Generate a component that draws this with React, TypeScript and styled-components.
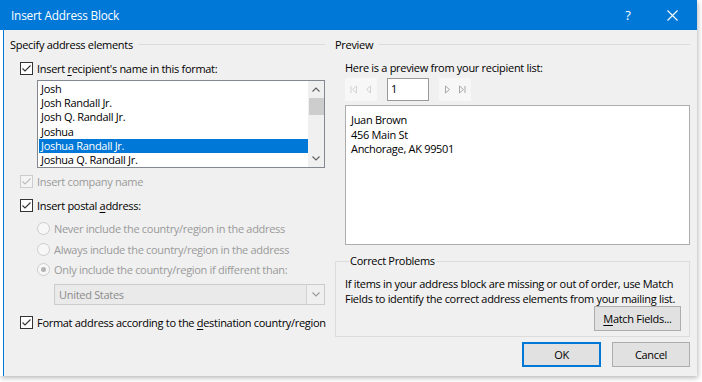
import React from 'react';
import styled, { createGlobalStyle } from 'styled-components';

const Global = createGlobalStyle`
  html, body { margin: 0; padding: 0; background: #ffffff; }
  body {
    font-family: "Open Sans", "Noto Sans", sans-serif;
    font-size: 11px;
    letter-spacing: -0.3px;
    color: #000;
  }
  #root { width: 702px; height: 382px; }
`;

const Window = styled.div`
  width: 697px;
  height: 376px;
  display: flex;
  flex-direction: column;
  box-shadow: 1px 2px 5px rgba(0, 0, 0, 0.28);
`;

const TitleBar = styled.div`
  height: 30px;
  flex: none;
  background: #0078d7;
  color: #fff;
  display: flex;
  align-items: center;
  padding: 0 3px 0 11px;
  font-size: 11.8px;
  letter-spacing: -0.2px;
`;

const Title = styled.div`
  flex: 1;
`;

const TitleButton = styled.div`
  width: 44px;
  height: 30px;
  display: flex;
  align-items: center;
  justify-content: center;
  font-size: 13px;
`;

const Body = styled.div`
  flex: 1;
  margin-left: 3px;
  border-left: 1px solid #0078d7;
  background: #f0f0f0;
  display: grid;
  grid-template-columns: 315px 355px;
  column-gap: 10px;
  padding: 6px 0 0 6px;
  align-items: start;
`;

const Column = styled.div`
  display: flex;
  flex-direction: column;
`;

const GroupHeader = styled.div`
  height: 16px;
  display: flex;
  align-items: center;
  gap: 5px;
`;

const Rule = styled.div`
  flex: 1;
  height: 1px;
  background: #dcdcdc;
`;

const Row = styled.div<{ $top: number; $indent: number; $disabled?: boolean }>`
  height: 16px;
  display: flex;
  align-items: center;
  gap: 4px;
  margin-top: ${(p) => p.$top}px;
  padding-left: ${(p) => p.$indent}px;
  color: ${(p) => (p.$disabled ? '#9a9a9a' : '#000')};
  white-space: nowrap;
`;

const Box = styled.span<{ $disabled?: boolean }>`
  width: 13px;
  height: 13px;
  box-sizing: border-box;
  border: 1px solid ${(p) => (p.$disabled ? '#cccccc' : '#333333')};
  background: ${(p) => (p.$disabled ? '#f4f4f4' : '#ffffff')};
  display: inline-flex;
  flex: none;
`;

const Radio = styled.span<{ $checked?: boolean }>`
  width: 13px;
  height: 13px;
  box-sizing: border-box;
  border-radius: 50%;
  border: 1px solid #cccccc;
  background: #f7f7f7;
  flex: none;
  display: inline-flex;
  align-items: center;
  justify-content: center;
  &::after {
    content: '';
    width: 5px;
    height: 5px;
    border-radius: 50%;
    background: ${(p) => (p.$checked ? '#b4b4b4' : 'transparent')};
  }
`;

const U = styled.span`
  text-decoration: underline;
  text-underline-offset: 2px;
`;

const ListBox = styled.div`
  margin: 4px 0 0 27px;
  width: 288px;
  height: 88px;
  box-sizing: border-box;
  border: 1px solid #828790;
  background: #fff;
  display: flex;
  overflow: hidden;
`;

const Items = styled.div`
  flex: 1;
  display: flex;
  flex-direction: column;
  overflow: hidden;
  padding-top: 1px;
`;

const Item = styled.div<{ $selected?: boolean }>`
  height: 14.2px;
  line-height: 14.2px;
  flex: none;
  padding-left: 2px;
  margin-left: 1px;
  background: ${(p) => (p.$selected ? '#0078d7' : 'transparent')};
  color: ${(p) => (p.$selected ? '#fff' : '#000')};
  white-space: nowrap;
`;

const ScrollBar = styled.div`
  width: 16px;
  flex: none;
  background: #f0f0f0;
  display: flex;
  flex-direction: column;
  align-items: center;
`;

const ScrollArrow = styled.div`
  height: 17px;
  width: 16px;
  display: flex;
  align-items: center;
  justify-content: center;
`;

const Thumb = styled.div`
  width: 15px;
  height: 17px;
  background: #cdcdcd;
`;

const Track = styled.div`
  flex: 1;
`;

const Select = styled.div`
  margin: 7px 0 0 44px;
  width: 271px;
  height: 21px;
  box-sizing: border-box;
  border: 1px solid #cccccc;
  background: #eaeaea;
  display: flex;
  align-items: center;
  color: #8c8c8c;
`;

const SelectText = styled.div`
  flex: 1;
  padding-left: 4px;
`;

const SelectButton = styled.div`
  width: 17px;
  height: 19px;
  border-left: 1px solid #d4d4d4;
  background: #efefef;
  display: flex;
  align-items: center;
  justify-content: center;
`;

const Hint = styled.div`
  margin-top: 8px;
  padding-left: 10px;
  height: 16px;
  line-height: 16px;
`;

const NavRow = styled.div`
  margin: 2px 0 0 10px;
  height: 23px;
  display: flex;
  gap: 10px;
`;

const NavGroup = styled.div`
  width: 32px;
  height: 23px;
  background: #f7f7f7;
  display: flex;
  align-items: center;
  justify-content: space-evenly;
`;

const RecordInput = styled.div`
  width: 42px;
  height: 23px;
  box-sizing: border-box;
  border: 1px solid #9a9a9a;
  background: #fff;
  padding-left: 3px;
  line-height: 20px;
`;

const PreviewBox = styled.div`
  margin: 4px 0 0 10px;
  height: 140px;
  box-sizing: border-box;
  border: 1px solid #adadad;
  background: #fff;
  padding: 7px 0 0 5px;
  line-height: 14.5px;
`;

const Fieldset = styled.fieldset`
  margin: 8px 0 0 0;
  padding: 0 8px 5px 9px;
  border: 1px solid #dcdcdc;
  min-width: 0;
  display: flex;
  flex-direction: column;
`;

const Legend = styled.legend`
  padding: 0 1px;
  margin-left: 4px;
  line-height: 16px;
`;

const Paragraph = styled.div`
  margin-top: 7px;
  line-height: 15px;
  white-space: nowrap;
`;

const Button = styled.div<{ $default?: boolean; $width: number }>`
  width: ${(p) => p.$width}px;
  height: 25px;
  box-sizing: border-box;
  border: 1px solid ${(p) => (p.$default ? '#0078d7' : '#adadad')};
  box-shadow: ${(p) => (p.$default ? 'inset 0 0 0 1px #0078d7' : 'none')};
  background: #e1e1e1;
  display: flex;
  align-items: center;
  justify-content: center;
`;

const FieldsetActions = styled.div`
  display: flex;
  justify-content: flex-end;
  margin-top: 0;
`;

const DialogActions = styled.div`
  display: flex;
  justify-content: flex-end;
  gap: 11px;
  margin-top: 5px;
`;

const Check = ({ disabled }: { disabled?: boolean }) => (
  <Box $disabled={disabled}>
    <svg width="11" height="11" viewBox="0 0 11 11">
      <path d="M1.5 5.5 L4 8 L9.5 2.5" fill="none" stroke={disabled ? '#bdbdbd' : '#333'} strokeWidth="1.1" />
    </svg>
  </Box>
);

const Chevron = ({ up, color = '#606060' }: { up?: boolean; color?: string }) => (
  <svg width="8" height="5" viewBox="0 0 8 5">
    <path d={up ? 'M0.5 4.5 L4 1 L7.5 4.5' : 'M0.5 0.5 L4 4 L7.5 0.5'} fill="none" stroke={color} strokeWidth="1.1" />
  </svg>
);

const NavIcon = ({ dir, bar, color }: { dir: 'left' | 'right'; bar?: boolean; color: string }) => (
  <svg width="8" height="9" viewBox="0 0 8 9">
    {dir === 'left' ? (
      <>
        <path d="M6.5 1 L2.5 4.5 L6.5 8 Z" fill="none" stroke={color} strokeWidth="1" />
        {bar && <path d="M1 1 V8" stroke={color} strokeWidth="1" />}
      </>
    ) : (
      <>
        <path d="M1.5 1 L5.5 4.5 L1.5 8 Z" fill="none" stroke={color} strokeWidth="1" />
        {bar && <path d="M7 1 V8" stroke={color} strokeWidth="1" />}
      </>
    )}
  </svg>
);

const names = [
  'Josh',
  'Josh Randall Jr.',
  'Josh Q. Randall Jr.',
  'Joshua',
  'Joshua Randall Jr.',
  'Joshua Q. Randall Jr.',
];

export default function App() {
  return (
    <>
      <Global />
      <Window>
        <TitleBar>
          <Title>Insert Address Block</Title>
          <TitleButton>?</TitleButton>
          <TitleButton>
            <svg width="11" height="11" viewBox="0 0 11 11">
              <path d="M0.5 0.5 L10.5 10.5 M10.5 0.5 L0.5 10.5" stroke="#fff" strokeWidth="1.1" />
            </svg>
          </TitleButton>
        </TitleBar>
        <Body>
          <Column>
            <GroupHeader>
              Specify address elements
              <Rule />
            </GroupHeader>
            <Row $top={8} $indent={10}>
              <Check />
              <span>
                Insert <U>r</U>ecipient's name in this format:
              </span>
            </Row>
            <ListBox>
              <Items>
                {names.map((n, i) => (
                  <Item key={n} $selected={i === 4}>
                    {n}
                  </Item>
                ))}
              </Items>
              <ScrollBar>
                <ScrollArrow>
                  <Chevron up />
                </ScrollArrow>
                <Thumb />
                <Track />
                <ScrollArrow>
                  <Chevron />
                </ScrollArrow>
              </ScrollBar>
            </ListBox>
            <Row $top={5} $indent={10} $disabled>
              <Check disabled />
              <span>Insert company name</span>
            </Row>
            <Row $top={8} $indent={10}>
              <Check />
              <span>
                Insert postal <U>a</U>ddress:
              </span>
            </Row>
            <Row $top={7} $indent={27} $disabled>
              <Radio />
              <span>Never include the country/region in the address</span>
            </Row>
            <Row $top={5} $indent={27} $disabled>
              <Radio />
              <span>Always include the country/region in the address</span>
            </Row>
            <Row $top={4} $indent={27} $disabled>
              <Radio $checked />
              <span>Only include the country/region if different than:</span>
            </Row>
            <Select>
              <SelectText>United States</SelectText>
              <SelectButton>
                <Chevron color="#9a9a9a" />
              </SelectButton>
            </Select>
            <Row $top={9} $indent={10}>
              <Check />
              <span>
                Format address according to the <U>d</U>estination country/region
              </span>
            </Row>
          </Column>
          <Column>
            <GroupHeader>
              Preview
              <Rule />
            </GroupHeader>
            <Hint>Here is a preview from your recipient list:</Hint>
            <NavRow>
              <NavGroup>
                <NavIcon dir="left" bar color="#d2d2d2" />
                <NavIcon dir="left" color="#d2d2d2" />
              </NavGroup>
              <RecordInput>1</RecordInput>
              <NavGroup>
                <NavIcon dir="right" color="#a8a8a8" />
                <NavIcon dir="right" bar color="#a8a8a8" />
              </NavGroup>
            </NavRow>
            <PreviewBox>
              Juan Brown
              <br />
              456 Main St
              <br />
              Anchorage, AK 99501
            </PreviewBox>
            <Fieldset>
              <Legend>Correct Problems</Legend>
              <Paragraph>
                If items in your address block are missing or out of order, use Match
                <br />
                Fields to identify the correct address elements from your mailing list.
              </Paragraph>
              <FieldsetActions>
                <Button $width={87}>
                  <span>
                    <U>M</U>atch Fields...
                  </span>
                </Button>
              </FieldsetActions>
            </Fieldset>
            <DialogActions>
              <Button $default $width={79}>
                OK
              </Button>
              <Button $width={78}>Cancel</Button>
            </DialogActions>
          </Column>
        </Body>
      </Window>
    </>
  );
}
